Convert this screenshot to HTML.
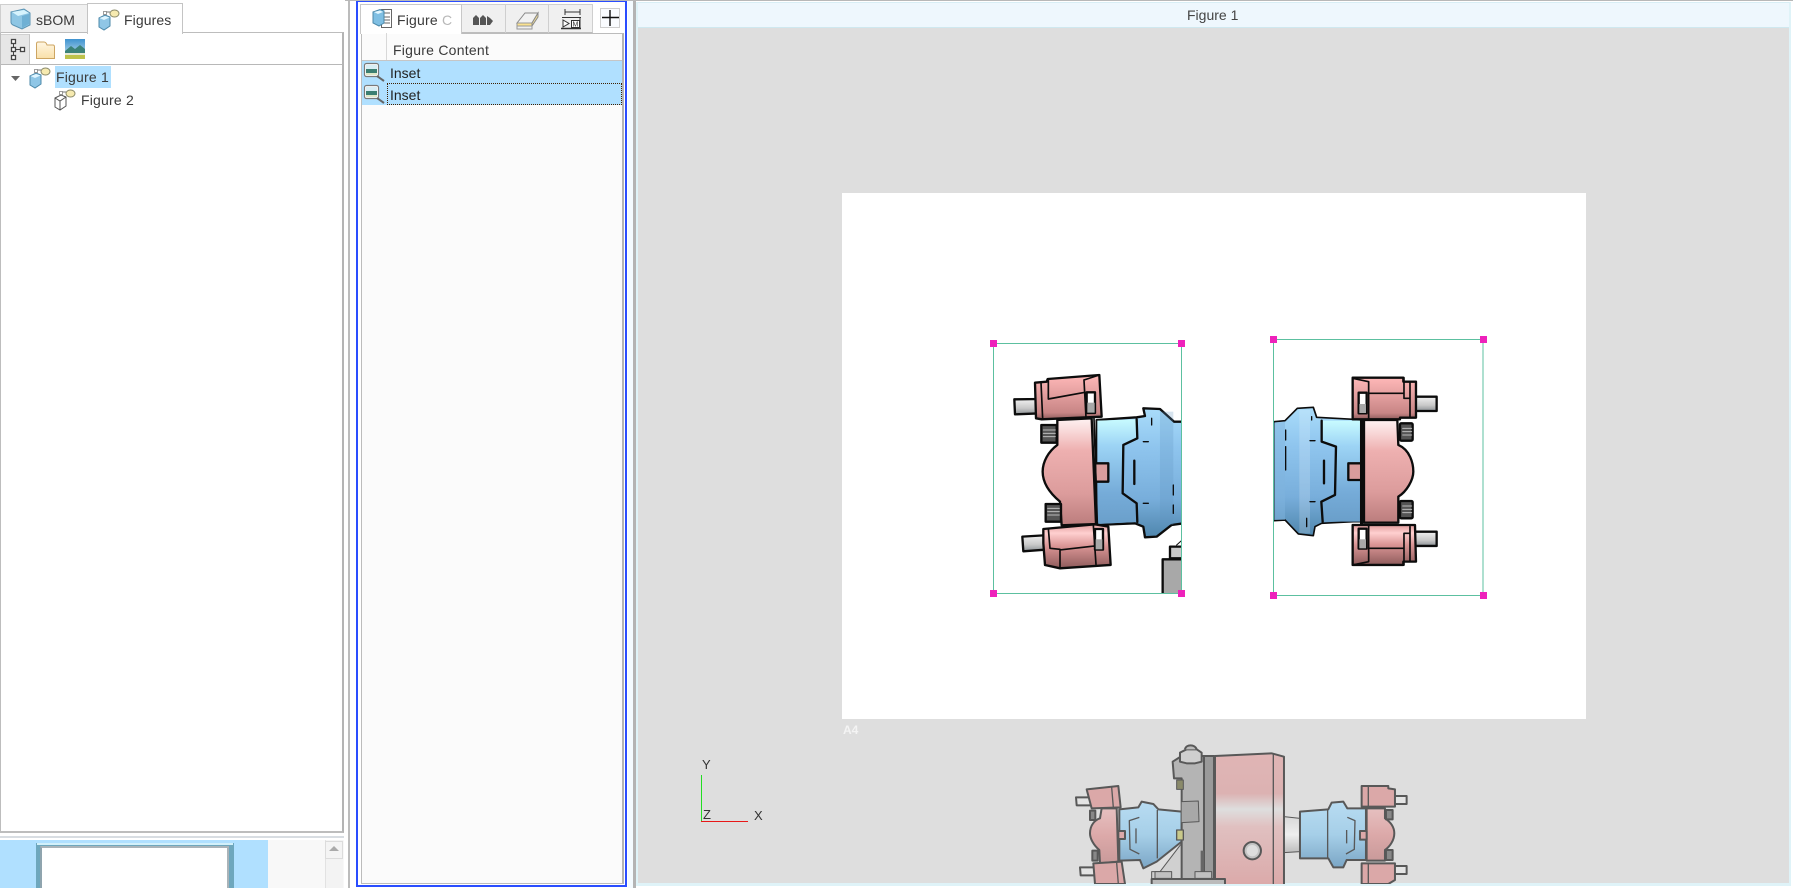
<!DOCTYPE html>
<html>
<head>
<meta charset="utf-8">
<style>
html,body{margin:0;padding:0;width:1793px;height:888px;overflow:hidden;background:#fff;font-family:"Liberation Sans",sans-serif;font-size:14px;color:#3a3a3a}
.a{position:absolute;box-sizing:border-box}
.t{position:absolute;white-space:nowrap;line-height:18px}
svg{position:absolute;overflow:visible}
</style>
</head>
<body>
<!-- top strip -->
<div class="a" style="left:345px;top:0;width:1448px;height:1px;background:#b8b8b8"></div>

<!-- LEFT PANEL -->
<div class="a" style="left:0;top:32px;width:344px;height:801px;background:#fff;border:1px solid #bdbdbd;border-right:2px solid #b4b4b4;border-bottom:2px solid #bdbdbd"></div>
<div class="a" style="left:0;top:4px;width:88px;height:29px;background:#f0f0f0;border:1px solid #cfcfcf;border-bottom:1px solid #bdbdbd"></div>
<div class="a" style="left:87px;top:3px;width:96px;height:31px;background:#fff;border:1px solid #c4c4c4;border-bottom:0"></div>
<div class="t" style="left:36px;top:11px">sBOM</div>
<div class="t" style="left:124px;top:11px;letter-spacing:.1px">Figures</div>
<div class="a" style="left:1px;top:64px;width:341px;height:1px;background:#b8b8b8"></div>
<div class="a" style="left:1px;top:34px;width:29px;height:30px;background:#e6e6e6;border-right:1px solid #c4c4c4;border-top:1px solid #d0d0d0"></div>
<div class="a" style="left:55px;top:66px;width:56px;height:22px;background:#b0e0ff"></div>
<div class="t" style="left:56px;top:68px;letter-spacing:.2px">Figure 1</div>
<div class="t" style="left:81px;top:91px;letter-spacing:.2px">Figure 2</div>
<div class="a" style="left:0;top:836px;width:344px;height:2px;background:#d8dde2"></div>

<!-- preview -->
<div class="a" style="left:0;top:840px;width:268px;height:48px;background:#b0e0ff"></div>
<div class="a" style="left:268px;top:840px;width:76px;height:48px;background:#f8f8f8"></div>
<div class="a" style="left:36px;top:843px;width:198px;height:45px;background:#6ea7bd"></div>
<div class="a" style="left:37px;top:843px;width:196px;height:2px;background:#d2f0fa"></div>
<div class="a" style="left:40px;top:846px;width:189px;height:42px;background:#fff;border:2px solid #aab3b8;border-bottom:0;border-left-color:#8fa4ae"></div>
<div class="a" style="left:325px;top:840px;width:18px;height:48px;background:#f3f3f3;border-left:1px solid #e2e2e2"></div>
<div class="a" style="left:325px;top:841px;width:18px;height:18px;background:#f4f4f4;border:1px solid #dcdcdc"></div>

<!-- MIDDLE PANEL -->
<div class="a" style="left:348px;top:1px;width:2px;height:887px;background:#bcbcbc"></div>
<div class="a" style="left:356px;top:1px;width:271px;height:886px;border:2px solid #2a4dff;border-top-width:1px;background:#fff"></div>
<div class="a" style="left:361px;top:33px;width:263px;height:851px;background:#fbfbfb;border:1px solid #bcbcbc;border-right:2px solid #b4b4b4"></div>
<div class="a" style="left:461px;top:4px;width:132px;height:29px;background:#f0f0f0;border:1px solid #cfcfcf;border-bottom:1px solid #bdbdbd"></div>
<div class="a" style="left:505px;top:4px;width:1px;height:29px;background:#cfcfcf"></div>
<div class="a" style="left:548px;top:4px;width:1px;height:29px;background:#cfcfcf"></div>
<div class="a" style="left:360px;top:4px;width:102px;height:30px;background:#fff;border:1px solid #c8c8c8;border-bottom:0;overflow:hidden"></div>
<div class="t" style="left:397px;top:11px;letter-spacing:.2px">Figure</div>
<div class="t" style="left:442px;top:11px;color:#b8b8b8">C</div>
<div class="a" style="left:600px;top:8px;width:20px;height:20px;background:#fafcff;border:1px solid #cfcfcf"></div>
<div class="a" style="left:386px;top:33px;width:1px;height:27px;background:#d8d8d8"></div>
<div class="t" style="left:393px;top:41px;letter-spacing:.25px">Figure Content</div>
<div class="a" style="left:362px;top:60px;width:260px;height:1px;background:#c6c6c6"></div>
<div class="a" style="left:362px;top:61px;width:260px;height:44px;background:#b0e0ff"></div>
<div class="a" style="left:387px;top:83px;width:235px;height:22px;border:1px dotted #402000"></div>
<div class="t" style="left:390px;top:64px;color:#222">Inset</div>
<div class="t" style="left:390px;top:86px;color:#222">Inset</div>

<!-- MAIN -->
<div class="a" style="left:628px;top:1px;width:6px;height:887px;background:#f4fbff"></div>
<div class="a" style="left:633px;top:1px;width:3px;height:887px;background:#b4b4b4"></div>
<div class="a" style="left:636px;top:2px;width:1155px;height:884px;background:#dedede;border:2px solid #dff3f8;border-top:1px solid #d8eef5;border-bottom-width:3px"></div>
<div class="a" style="left:638px;top:3px;width:1151px;height:25px;background:#eef7fd;border-bottom:1px solid #cfe8ef"></div>
<div class="t" style="left:1187px;top:6px;color:#444">Figure 1</div>
<div class="a" style="left:842px;top:193px;width:744px;height:526px;background:#fff"></div>
<div class="t" style="left:843px;top:723px;color:#f4f4f4;font-size:12px;font-weight:bold;line-height:14px">A4</div>
<div class="t" style="left:702px;top:757px;font-size:13px;line-height:16px;color:#333">Y</div>
<div class="t" style="left:703px;top:807px;font-size:13px;line-height:16px;color:#333">Z</div>
<div class="t" style="left:754px;top:808px;font-size:13px;line-height:16px;color:#333">X</div>

<svg width="1793" height="888" viewBox="0 0 1793 888" style="left:0;top:0">
<defs>
<linearGradient id="blue" x1="0" y1="0" x2="0" y2="1"><stop offset="0" stop-color="#a9dcfa"/><stop offset=".3" stop-color="#8fc5ee"/><stop offset=".7" stop-color="#78aedb"/><stop offset="1" stop-color="#4f86ad"/></linearGradient>
<linearGradient id="blueL" x1="0" y1="0" x2="0" y2="1"><stop offset="0" stop-color="#c8fbff"/><stop offset=".25" stop-color="#9dd4f5"/><stop offset=".7" stop-color="#76acd9"/><stop offset="1" stop-color="#6a9fca"/></linearGradient>
<linearGradient id="red" x1="0" y1="0" x2="0" y2="1"><stop offset="0" stop-color="#fff3f3"/><stop offset=".3" stop-color="#eeb0b0"/><stop offset=".7" stop-color="#dc9c9c"/><stop offset="1" stop-color="#bb7d7d"/></linearGradient>
<linearGradient id="clamp" x1="0" y1="0" x2="0" y2="1"><stop offset="0" stop-color="#ffb8b8"/><stop offset=".45" stop-color="#e29e9e"/><stop offset=".85" stop-color="#c88585"/><stop offset="1" stop-color="#8f5c5c"/></linearGradient>
<linearGradient id="clamp2" x1="0" y1="0" x2="0" y2="1"><stop offset="0" stop-color="#e09c9c"/><stop offset=".2" stop-color="#ffd0d0"/><stop offset=".5" stop-color="#d99494"/><stop offset="1" stop-color="#8f5c5c"/></linearGradient>
<linearGradient id="pin" x1="0" y1="0" x2="0" y2="1"><stop offset="0" stop-color="#f2f2f2"/><stop offset=".6" stop-color="#c8c8c8"/><stop offset="1" stop-color="#8d9296"/></linearGradient>
<linearGradient id="bb" x1="0" y1="0" x2="0" y2="1"><stop offset="0" stop-color="#b8dcf2"/><stop offset=".5" stop-color="#a6cfe8"/><stop offset="1" stop-color="#7ba6c6"/></linearGradient>
<linearGradient id="br" x1="0" y1="0" x2="0" y2="1"><stop offset="0" stop-color="#e6c0c0"/><stop offset=".5" stop-color="#dca9a9"/><stop offset="1" stop-color="#c99a9a"/></linearGradient>
<linearGradient id="hs" x1="0" y1="0" x2="0" y2="1"><stop offset="0" stop-color="#e0b5b5"/><stop offset=".3" stop-color="#dcb2b2"/><stop offset=".42" stop-color="#dedede"/><stop offset=".55" stop-color="#e0c0c0"/><stop offset="1" stop-color="#dba9a9"/></linearGradient>
<linearGradient id="neck" x1="0" y1="0" x2="0" y2="1"><stop offset="0" stop-color="#d8d8d8"/><stop offset=".5" stop-color="#eeeeee"/><stop offset="1" stop-color="#bdbdbd"/></linearGradient>
<linearGradient id="sky" x1="0" y1="0" x2="0" y2="1"><stop offset="0" stop-color="#3f93d0"/><stop offset="1" stop-color="#d2e8f0"/></linearGradient>
<linearGradient id="fold" x1="0" y1="0" x2="0" y2="1"><stop offset="0" stop-color="#fff6e2"/><stop offset="1" stop-color="#f9e0a9"/></linearGradient>
<clipPath id="c1"><rect x="994" y="344" width="187" height="250"/></clipPath>
<clipPath id="c3"><rect x="1000" y="730" width="500" height="154"/></clipPath>
</defs>

<!-- INSET 1 -->
<g clip-path="url(#c1)"><g transform="translate(980 330) scale(.3333)" stroke="#0c0c0c" stroke-width="7" stroke-linejoin="round" stroke-linecap="round">
<path d="M490 235L540 237L582 275L612 275V580L575 585L530 620L495 622L490 590L465 580L350 585L350 270L470 262L495 258Z" fill="url(#blue)"/>
<path d="M352 272L468 268L472 325L430 345L428 490L470 520L472 576L352 582Z" fill="url(#blueL)" stroke="none"/>
<rect x="540" y="245" width="40" height="340" fill="#5f93c0" opacity=".25" stroke="none"/>
<path d="M470 268L472 325L430 345L428 490L470 520L472 576" fill="none"/>
<path d="M463 392V462" fill="none"/>
<path d="M490 335L505 335M490 520L505 520M580 465V495M580 525V550M515 265V285" fill="none" stroke-width="4"/>
<path d="M345 400H385V455H347Z" fill="#d99d9d"/>
<path d="M232 270L335 265L348 582L245 586L240 515C210 490 188 460 188 425C188 395 205 365 232 345Z" fill="url(#red)"/>
<path d="M342 265L352 582" fill="none" stroke-width="5"/>
<rect x="184" y="285" width="46" height="53" fill="#555"/><path d="M190 300H226M190 310H226M190 320H226" stroke="#bbb" stroke-width="3"/>
<rect x="197" y="522" width="46" height="53" fill="#555"/><path d="M203 535H238M203 545H238M203 555H238" stroke="#bbb" stroke-width="3"/>
<path d="M103 208L183 207V250L105 253Z" fill="url(#pin)"/>
<path d="M203 147L358 135L365 260L185 268L168 265L165 158L200 155Z" fill="url(#clamp)"/>
<path d="M183 157L188 266M205 150L205 207L315 187M312 150L318 262M312 150L358 135" fill="none" stroke-width="5"/>
<rect x="320" y="187" width="25" height="62" fill="#fff"/><rect x="322" y="218" width="22" height="30" fill="#a8a8a8" stroke="none"/>
<path d="M127 620L210 615V658L130 664Z" fill="url(#pin)"/>
<path d="M190 597L345 583L385 590L392 705L240 715L195 705L190 640Z" fill="url(#clamp2)"/>
<path d="M205 595L210 655L240 658L240 713M240 660L345 648M340 585L348 703" fill="none" stroke-width="5"/>
<rect x="345" y="597" width="24" height="62" fill="#fff"/><rect x="347" y="628" width="20" height="30" fill="#a8a8a8" stroke="none"/>
<path d="M548 688H612V800H548Z" fill="#a8a8a8"/>
<path d="M570 650H612V685H570Z" fill="#c8c8c8"/>
<path d="M590 645L612 625" fill="none" stroke-width="3"/>
</g></g>

<!-- INSET 2 -->
<g transform="translate(1260 330) scale(.3333)" stroke="#0c0c0c" stroke-width="7" stroke-linejoin="round" stroke-linecap="round">
<path d="M42 275L75 272L112 235L160 232L170 262L280 268L300 270V575L280 575L185 580L165 590L160 617L115 612L75 570L42 572Z" fill="url(#blue)" stroke-width="5"/>
<path d="M42 278L75 275V570L42 570Z" fill="#7fb3de" stroke="none" opacity=".5"/>
<rect x="118" y="240" width="32" height="370" fill="#fff" opacity=".18" stroke="none"/>
<path d="M185 272L300 272V575L188 575L184 515L225 495L228 350L185 335Z" fill="url(#blueL)" stroke="none"/>
<path d="M185 272L185 335L228 350L225 495L184 515L188 575" fill="none"/>
<path d="M192 392V460" fill="none"/>
<path d="M150 332L165 332M150 515L165 515M77 300V330M77 350V420M140 565V590M155 260V270" fill="none" stroke-width="4"/>
<path d="M305 400H265V450H305Z" fill="#d99d9d"/>
<path d="M312 270L412 270L415 345C450 360 460 400 460 425C460 450 440 485 415 500L415 578L312 578Z" fill="url(#red)"/>
<path d="M305 265V582" fill="none" stroke-width="10"/>
<rect x="420" y="280" width="38" height="52" rx="4" fill="#555"/><path d="M428 295H455M428 305H455M428 315H455" stroke="#bbb" stroke-width="3"/>
<rect x="420" y="513" width="38" height="52" rx="4" fill="#555"/><path d="M428 528H455M428 538H455M428 548H455" stroke="#bbb" stroke-width="3"/>
<path d="M455 200H530V243H455Z" fill="url(#pin)"/>
<path d="M278 143H430V155H468V263H420V268H278Z" fill="url(#clamp)"/>
<path d="M278 145L326 155V265M326 190H432M432 143V205H450M450 155V262" fill="none" stroke-width="5"/>
<rect x="296" y="188" width="24" height="62" fill="#fff"/><rect x="298" y="222" width="20" height="27" fill="#a8a8a8" stroke="none"/>
<path d="M455 605H530V648H455Z" fill="url(#pin)"/>
<path d="M278 585H465L468 695H430V705H278Z" fill="url(#clamp2)"/>
<path d="M278 705L326 695V585M326 655H432M432 705V610H450M450 590V695" fill="none" stroke-width="5"/>
<rect x="296" y="596" width="24" height="60" fill="#fff"/><rect x="298" y="628" width="20" height="27" fill="#a8a8a8" stroke="none"/>
</g>

<!-- selection frames -->
<rect x="993.5" y="343.5" width="188" height="250" fill="none" stroke="#5cc0a0" stroke-width="1"/>
<rect x="1273.5" y="339.5" width="209.5" height="256" fill="none" stroke="#5cc0a0" stroke-width="1"/>
<g fill="#ee22bb">
<rect x="990" y="340" width="7" height="7"/><rect x="1178" y="340" width="7" height="7"/><rect x="990" y="590" width="7" height="7"/><rect x="1178" y="590" width="7" height="7"/>
<rect x="1270" y="336" width="7" height="7"/><rect x="1480" y="336" width="7" height="7"/><rect x="1270" y="592" width="7" height="7"/><rect x="1480" y="592" width="7" height="7"/>
</g>

<!-- ASSEMBLY -->
<g clip-path="url(#c3)"><g transform="translate(1060 730) scale(.3333)" stroke="#585858" stroke-width="6" stroke-linejoin="round">
<!-- left motor -->
<path d="M178 238L235 232L245 215L280 222L295 238L365 245V335L290 395L250 415L240 390L178 392Z" fill="url(#bb)"/>
<path d="M238 262L208 272L210 358L238 372M228 295V340M292 240V385" fill="none" stroke-width="4"/>
<path d="M125 235H170L175 395L120 400L118 360C100 345 90 325 90 310C90 285 105 270 120 265Z" fill="url(#br)"/>
<rect x="175" y="303" width="20" height="24" fill="#dca9a9"/>
<rect x="90" y="242" width="16" height="28" fill="#888"/><rect x="97" y="362" width="16" height="30" fill="#888"/>
<path d="M48 202H95V226H50Z" fill="#e4e4e4"/><path d="M80 178L175 168L182 232L95 235Z" fill="#dba8a8"/><path d="M155 172L160 232" stroke-width="4"/>
<path d="M60 412H105V436H62Z" fill="#e4e4e4"/><path d="M100 400L185 395L195 462H105Z" fill="#dba8a8"/><path d="M170 398L175 462" stroke-width="4"/>
<!-- right motor -->
<path d="M672 260L720 265V365L672 368Z" fill="url(#neck)" stroke-width="3"/>
<path d="M720 245L805 238L815 218L850 215L862 235L918 235V390L860 390L850 412L820 412L805 385L720 385Z" fill="url(#bb)"/>
<path d="M862 262L885 272L883 358L858 372M860 300V340M803 240V385" fill="none" stroke-width="4"/>
<path d="M920 235H975V265C990 275 1003 290 1003 310C1003 330 990 350 975 360V392H920Z" fill="url(#br)"/>
<rect x="900" y="303" width="20" height="26" fill="#dca9a9"/>
<rect x="978" y="240" width="20" height="28" fill="#888"/><rect x="978" y="360" width="20" height="30" fill="#888"/>
<path d="M1000 198H1040V222H1000Z" fill="#e4e4e4"/><path d="M905 168H985V175L1005 178V230H905Z" fill="#dba8a8"/><path d="M925 170V232" stroke-width="4"/>
<path d="M1000 408H1040V432H1000Z" fill="#e4e4e4"/><path d="M905 400H1005V450L985 462H905Z" fill="#dba8a8"/><path d="M925 400V462" stroke-width="4"/>
<!-- housing -->
<path d="M465 78L635 70L672 80V470H465Z" fill="url(#hs)"/>
<path d="M640 72V470" stroke-width="4"/>
<circle cx="577" cy="362" r="26" fill="#c4c4c4" stroke-width="6"/>
<circle cx="577" cy="362" r="17" fill="#dedede" stroke="none"/>
<!-- column -->
<path d="M365 340L300 425H275V470H365Z" fill="#d0d0d0" stroke-width="3"/>
<path d="M338 95L365 78H435V470H365V145H342Z" fill="#b4b4b4"/>
<rect x="432" y="78" width="30" height="392" fill="#9a9a9a"/>
<rect x="422" y="362" width="10" height="100" fill="#666" stroke="none"/>
<path d="M365 215L415 213L417 275L365 278" fill="#a8a8a8" stroke-width="3"/>
<path d="M360 68L380 58H410L425 68V95L405 100H380L360 95Z" fill="#cfcfcf"/>
<path d="M375 58C378 42 405 42 410 58" fill="#bbb"/>
<rect x="350" y="150" width="20" height="28" fill="#8a8a6a" stroke-width="3"/>
<rect x="350" y="300" width="20" height="30" fill="#c9c98a" stroke-width="4"/>
<rect x="285" y="425" width="50" height="20" fill="#c0c0c0" stroke-width="3"/>
<rect x="405" y="425" width="50" height="20" fill="#c0c0c0" stroke-width="3"/>
<rect x="275" y="447" width="220" height="25" fill="#bbb"/>
</g></g>

<!-- axes -->
<rect x="701" y="775" width="1" height="47" fill="#22dd22"/>
<rect x="701" y="821" width="47" height="1" fill="#e81818"/>

<!-- sBOM icon -->
<g>
<path d="M11 12L24 9L30 13V25L22 29L13 25Q11 24 11 22Z" fill="#8ec6e4" stroke="#5a93b3"/>
<path d="M12 12L24 10L29 13L18 16Z" fill="#d6f3fd"/>
<path d="M22 16V28L29 24V14Z" fill="#6fb0d4"/>
</g>
<!-- figure icons -->
<g id="fi">
<path d="M99 18L105 15L110 17V26L104 30L99 27Z" fill="#8fc6e6" stroke="#4c89aa"/>
<path d="M99.5 18L105 16L109.5 17.5L104 20Z" fill="#dff5ff"/>
<path d="M105 15V12H110" fill="none" stroke="#777"/>
<rect x="103.5" y="11.5" width="3" height="3" fill="#fff" stroke="#777" stroke-width=".7"/>
<ellipse cx="114.5" cy="13.5" rx="4.5" ry="3.5" fill="#f6eab0" stroke="#8a8a6a"/>
</g>
<g transform="translate(-69 58)">
<path d="M99 18L105 15L110 17V26L104 30L99 27Z" fill="#8fc6e6" stroke="#4c89aa"/>
<path d="M99.5 18L105 16L109.5 17.5L104 20Z" fill="#dff5ff"/>
<path d="M105 15V12H110" fill="none" stroke="#777"/>
<rect x="103.5" y="11.5" width="3" height="3" fill="#fff" stroke="#777" stroke-width=".7"/>
<ellipse cx="114.5" cy="13.5" rx="4.5" ry="3.5" fill="#f6eab0" stroke="#8a8a6a"/>
</g>
<g transform="translate(-44 80)">
<path d="M99 18L105 15L110 17V26L104 30L99 27Z" fill="#fff" stroke="#555"/>
<path d="M99 18L104 21L110 17M104 21V30" fill="none" stroke="#555"/>
<path d="M105 15V12H110" fill="none" stroke="#777"/>
<rect x="103.5" y="11.5" width="3" height="3" fill="#fff" stroke="#777" stroke-width=".7"/>
<ellipse cx="114.5" cy="13.5" rx="4.5" ry="3.5" fill="#f6eab0" stroke="#8a8a6a"/>
</g>
<!-- tree toolbar icon -->
<g fill="#fff" stroke="#444" stroke-width="1.3">
<rect x="11.5" y="39.5" width="4" height="4"/><rect x="11.5" y="47.5" width="4" height="4"/><rect x="11.5" y="55.5" width="4" height="4"/><rect x="20.5" y="47.5" width="4" height="4"/>
</g>
<path d="M13.5 44V47M13.5 52V55M16 49.5H20" stroke="#444" fill="none"/>
<!-- folder -->
<path d="M36.5 44Q36.5 42 38 42H44Q46 42 47 45H53Q54.5 45 54.5 47V58.5H36.5Z" fill="url(#fold)" stroke="#cda562"/>
<!-- landscape -->
<rect x="65" y="39" width="20" height="20" fill="url(#sky)"/>
<path d="M65 51L71 46L75 49L80 45L85 49V54H65Z" fill="#3b8278"/>
<rect x="65" y="53" width="20" height="2" fill="#e4e8d2"/>
<rect x="65" y="55" width="20" height="4" fill="#bdc24a"/>
<!-- tree arrow -->
<path d="M11 76H20L15.5 81Z" fill="#666"/>
<!-- tab icon figure -->
<rect x="381.5" y="9.5" width="10" height="18" fill="#fff" stroke="#666"/>
<path d="M384 17H390M384 20H390M384 23H390M384 13H390" stroke="#666" fill="none"/>
<path d="M373 12L380 9.5L384 11V23L379 26L373 23Z" fill="#7fbfe3" stroke="#4c89aa"/>
<path d="M374 12L380 10.5L383 12L378 14Z" fill="#e2f6ff"/>
<!-- other tabs -->
<g fill="#555">
<path d="M473 25V18L476 15L479 18V25Z"/>
<path d="M480 25V18L483 15L486 18V25Z"/>
<path d="M487 25V16L490 18L493 21L490 25Z"/>
</g>
<path d="M517 23L525 13H538L532 23Z" fill="#f2f2f2" stroke="#888"/>
<path d="M517 23H532V26H517Z" fill="#fbe28f" stroke="#999"/>
<path d="M532 23L538 13V17L532 26Z" fill="#eedc9a" stroke="#888"/>
<path d="M517 26H532V29H517Z" fill="#f0f0f0" stroke="#999"/>
<path d="M565 9V15M580 9V15M565 12H580M562 17.5H581M580 17V28" fill="none" stroke="#333"/>
<path d="M561 28.5H581" stroke="#333" stroke-width="1.6" fill="none"/>
<rect x="571.5" y="20.5" width="8" height="7" fill="#fff" stroke="#333"/>
<path d="M563 20V27L569 23.5Z" fill="#fff" stroke="#333"/>
<text x="572.5" y="26.5" font-family="Liberation Sans, sans-serif" font-size="7" fill="#333">M</text>
<!-- plus -->
<path d="M610 10V26M602 17.5H619" stroke="#111" stroke-width="1.4" fill="none"/>
<!-- inset icons -->
<g id="mag">
<rect x="364.5" y="63.5" width="14" height="13" rx="2" fill="#fff" stroke="#7a7a7a" stroke-width="1.2"/>
<rect x="366" y="65" width="11" height="4" fill="#d8eef5"/>
<rect x="366" y="69" width="11" height="4" fill="#3c7f72"/>
<rect x="366" y="73" width="11" height="2" fill="#dfe8c8"/>
<path d="M377 76L384 81" stroke="#666" stroke-width="2" fill="none"/>
</g>
<g transform="translate(0 22)">
<rect x="364.5" y="63.5" width="14" height="13" rx="2" fill="#fff" stroke="#7a7a7a" stroke-width="1.2"/>
<rect x="366" y="65" width="11" height="4" fill="#d8eef5"/>
<rect x="366" y="69" width="11" height="4" fill="#3c7f72"/>
<rect x="366" y="73" width="11" height="2" fill="#dfe8c8"/>
<path d="M377 76L384 81" stroke="#666" stroke-width="2" fill="none"/>
</g>
<!-- scroll arrow -->
<path d="M329 851L334 846L339 851Z" fill="#aaa"/>
</svg>
</body>
</html>
